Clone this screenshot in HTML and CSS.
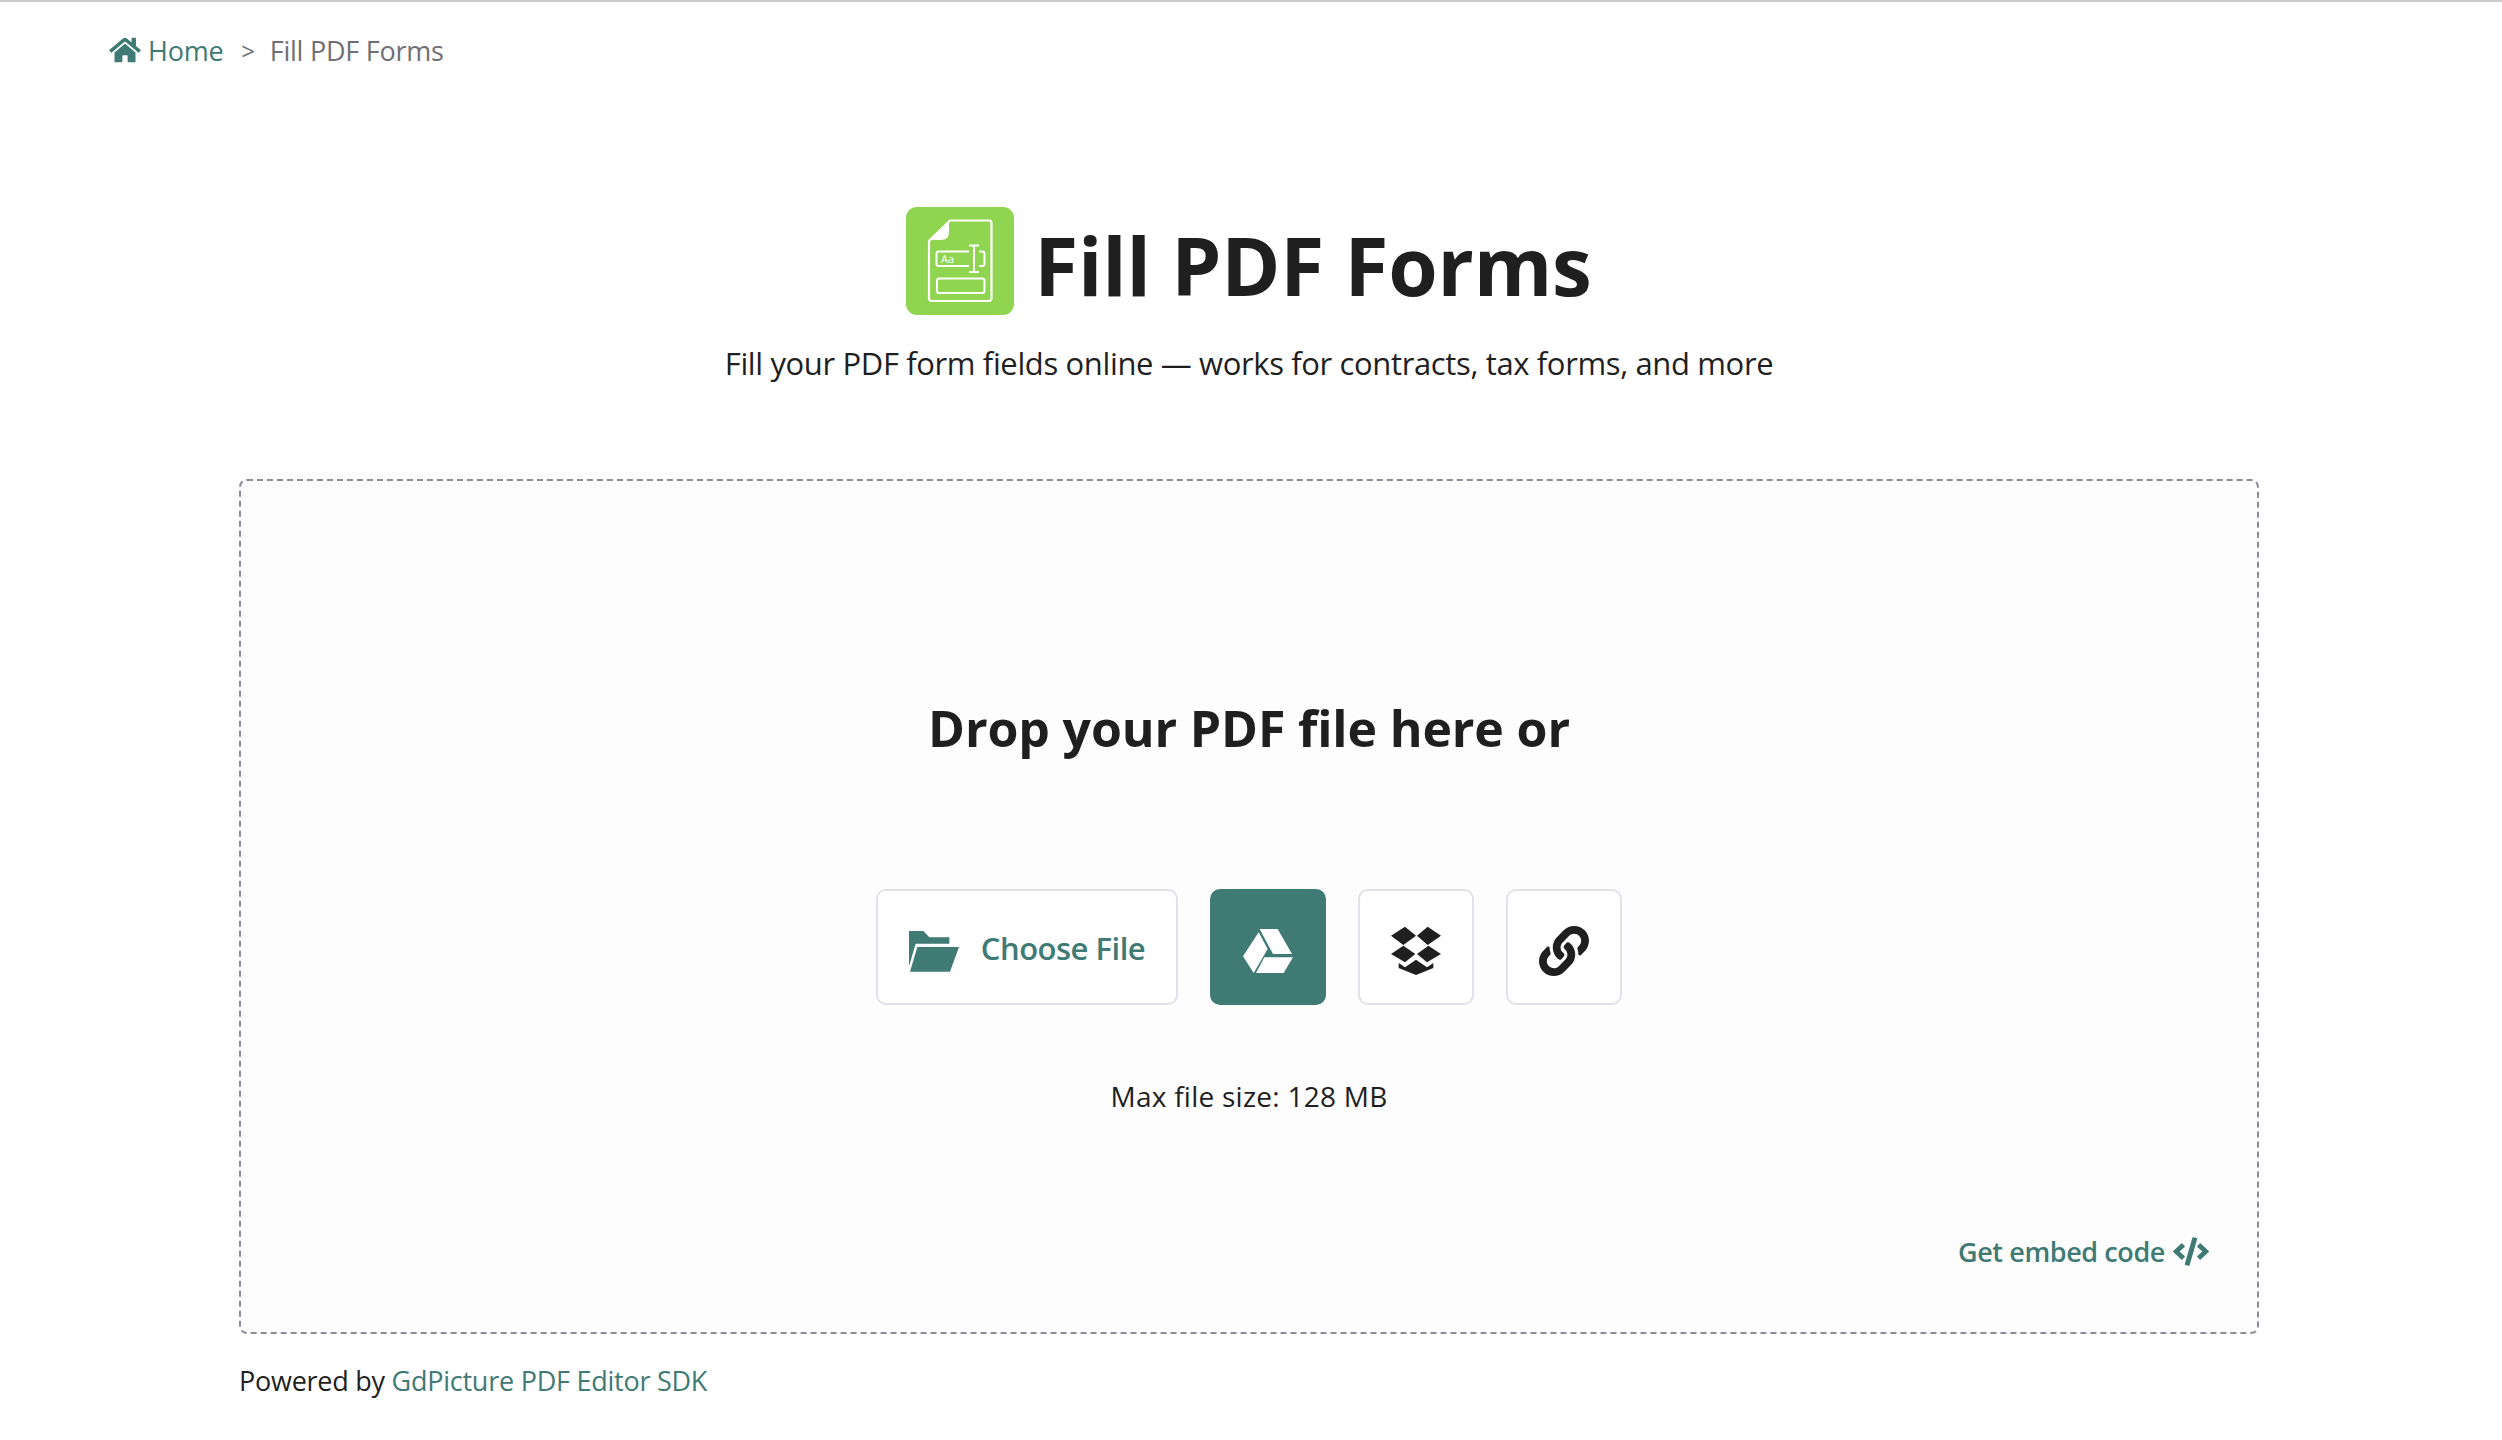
FILE: index.html
```html
<!DOCTYPE html>
<html lang="en">
<head>
	<meta charset="UTF-8">
	<title>Fill PDF Forms</title>
	<link rel="stylesheet" href="styles.css">
</head>
<body>
	<nav class="crumbs">
		<a class="crumbs__home" href="#">
			<svg class="crumbs__icon" viewBox="0 0 576 512"><path d="M280.37 148.26L96 300.11V464a16 16 0 0 0 16 16l112.06-.29a16 16 0 0 0 15.92-16V368a16 16 0 0 1 16-16h64a16 16 0 0 1 16 16v95.64a16 16 0 0 0 16 16.05L464 480a16 16 0 0 0 16-16V300L295.67 148.26a12.19 12.19 0 0 0-15.3 0zM571.6 251.47L488 182.56V44.05a12 12 0 0 0-12-12h-56a12 12 0 0 0-12 12v72.61L318.47 43a48 48 0 0 0-61 0L4.34 251.47a12 12 0 0 0-1.6 16.9l25.5 31A12 12 0 0 0 45.15 301l235.22-193.74a12.19 12.19 0 0 1 15.3 0L530.9 301a12 12 0 0 0 16.9-1.6l25.5-31a12 12 0 0 0-1.7-16.93z"/></svg>
			Home
		</a>
		<span class="crumbs__sep">&gt;</span>
		<span class="crumbs__current">Fill PDF Forms</span>
	</nav>

	<main class="page">
		<header class="head">
			<div class="head__title">
				<svg class="head__logo" viewBox="0 0 108 108">
					<rect width="108" height="108" rx="11" fill="#8fd550"/>
					<path d="M44 13.5H83a2.5 2.5 0 0 1 2.5 2.5V91.500a2.500 2.500 0 0 1-2.500 2.500H25.500a2.500 2.500 0 0 1-2.500-2.500V34Z" fill="none" stroke="#fff" stroke-width="2.2"/>
					<path d="M42 16V25q0 7-7 7H25Z" fill="#fff" stroke="#fff" stroke-width="2"/>
					<path d="M63 44.500H32.500a2 2 0 0 0-2 2V57a2 2 0 0 0 2 2H63M73 44.500H76.500a2 2 0 0 1 2 2V57a2 2 0 0 1-2 2H73" fill="none" stroke="#fff" stroke-width="2"/>
					<path d="M63 38.500H73M68 38.500V65M63 65H73" fill="none" stroke="#fff" stroke-width="2"/>
					<rect x="31" y="71.500" width="47.500" height="14.500" rx="2" fill="none" stroke="#fff" stroke-width="2"/>
					<text class="head__logo-text" x="35" y="55.500">Aa</text>
				</svg>
				<h1>Fill PDF Forms</h1>
			</div>
			<p class="head__sub">Fill your PDF form fields online — works for contracts, tax forms, and more</p>
		</header>

		<section class="drop">
			<h2 class="drop__title">Drop your PDF file here or</h2>
			<div class="drop__buttons">
				<button class="btn btn--file">
					<svg class="btn__folder" viewBox="0 0 150 123"><path d="M0 0H43L61 19H121V38H20L0 106Z"/><path d="M25 48H150L123 122H3Z"/></svg>
					Choose File
				</button>
				<button class="btn btn--square btn--drive">
					<svg class="btn__icon" viewBox="0 0 150 132"><path d="M50 0H104L147 75H90Z"/><path d="M47 10L74 60L32 132L0 82Z"/><path d="M64 85H150L122 132H39Z"/></svg>
				</button>
				<button class="btn btn--square">
					<svg class="btn__icon" viewBox="0 0 150 146"><path d="M0 27L42 0L75 27L37 55Z"/><path d="M78 27L110 0L150 27L110 55Z"/><path d="M0 82L37 57L73 82L42 107Z"/><path d="M78 82L112 57L150 82L108 107Z"/><path d="M23 109L42 122L75 99L108 122L127 109V124L75 145L23 124Z"/></svg>
				</button>
				<button class="btn btn--square">
					<svg class="btn__icon" viewBox="0 0 512 512"><path d="M326.612 185.391c59.747 59.809 58.927 155.698.36 214.59-.11.12-.24.25-.36.37l-67.2 67.2c-59.27 59.27-155.699 59.262-214.96 0-59.27-59.26-59.27-155.7 0-214.96l37.106-37.106c9.84-9.84 26.786-3.3 27.294 10.606.648 17.722 3.826 35.527 9.69 52.721 1.986 5.822.567 12.262-3.783 16.612l-13.087 13.087c-28.026 28.026-28.905 73.66-1.155 101.96 28.024 28.579 74.086 28.749 102.325.51l67.2-67.19c28.191-28.191 28.073-73.757 0-101.83-3.701-3.694-7.429-6.564-10.341-8.569a16.037 16.037 0 0 1-6.947-12.606c-.396-10.567 3.348-21.456 11.698-29.806l21.054-21.055c5.521-5.521 14.182-6.199 20.584-1.731a152.482 152.482 0 0 1 20.522 17.197zM467.547 44.449c-59.261-59.262-155.69-59.27-214.96 0l-67.2 67.2c-.12.12-.25.25-.36.37-58.566 58.892-59.387 154.781.36 214.59a152.454 152.454 0 0 0 20.521 17.196c6.402 4.468 15.064 3.789 20.584-1.731l21.054-21.055c8.35-8.35 12.094-19.239 11.698-29.806a16.037 16.037 0 0 0-6.947-12.606c-2.912-2.005-6.64-4.875-10.341-8.569-28.073-28.073-28.191-73.639 0-101.83l67.2-67.19c28.239-28.239 74.3-28.069 102.325.51 27.75 28.3 26.872 73.934-1.155 101.96l-13.087 13.087c-4.35 4.35-5.769 10.79-3.783 16.612 5.864 17.194 9.042 34.999 9.69 52.721.509 13.906 17.454 20.446 27.294 10.606l37.106-37.106c59.271-59.259 59.271-155.699.001-214.959z"/></svg>
				</button>
			</div>
			<p class="drop__limit">Max file size: 128 MB</p>
			<a class="drop__embed" href="#">Get embed code
				<svg class="drop__code" viewBox="0 0 640 512"><path d="M278.9 511.5l-61-17.7c-6.4-1.8-10-8.5-8.2-14.9L346.2 8.7c1.8-6.4 8.5-10 14.9-8.2l61 17.7c6.4 1.8 10 8.5 8.2 14.9L293.8 503.3c-1.9 6.4-8.5 10.1-14.9 8.2zm-114-112.2l43.5-46.4c4.6-4.9 4.3-12.7-.8-17.2L117 256l90.6-79.7c5.1-4.5 5.5-12.3.8-17.2l-43.5-46.4c-4.5-4.8-12.1-5.1-17-.5L3.8 247.2c-5.1 4.7-5.1 12.8 0 17.5l144.1 135.1c4.9 4.6 12.5 4.4 17-.5zm327.2.6l144.1-135.1c5.1-4.7 5.1-12.8 0-17.5L492.1 112.1c-4.8-4.5-12.4-4.3-17 .5L431.6 159c-4.6 4.9-4.3 12.7.8 17.2L523 256l-90.6 79.7c-5.1 4.5-5.5 12.3-.8 17.2l43.5 46.4c4.5 4.9 12.1 5.1 17 .6z"/></svg>
			</a>
		</section>

		<p class="powered">Powered by <a href="#">GdPicture PDF Editor SDK</a></p>
	</main>
</body>
</html>
```

FILE: styles.css
```css
* {
	box-sizing: border-box;
}
body {
	margin: 0;
	border-top: 2px solid #cccccc;
	font-family: "Open Sans", "Noto Sans", sans-serif;
	font-size: 28px;
	color: #1f1f1f;
	background: #fff;
}
a {
	color: #3f7a75;
	text-decoration: none;
}
svg {
	display: block;
	fill: currentColor;
}
.crumbs {
	display: flex;
	align-items: center;
	height: 96px;
	padding: 0 0 0 109px;
	font-size: 27px;
	letter-spacing: -0.25px;
}
.crumbs__home {
	display: flex;
	align-items: center;
	gap: 7px;
}
.crumbs__icon {
	width: 32px;
	height: 28px;
}
.crumbs__sep {
	margin: 0 15px 0 18px;
	color: #6f6f75;
	font-size: 24px;
}
.crumbs__current {
	color: #6f6f75;
}
.page {
	width: 2020px;
	margin: 0 0 0 239px;
}
.head {
	padding-top: 109px;
	text-align: center;
}
.head__title {
	display: flex;
	justify-content: center;
	align-items: center;
	gap: 20px;
}
.head__logo {
	width: 108px;
	height: 108px;
	flex: none;
}
.head__logo-text {
	fill: #fff;
	font-size: 11px;
	letter-spacing: 0;
}
h1 {
	margin: 0;
	padding-top: 8px;
	font-size: 80px;
	line-height: 100px;
	font-weight: 700;
	letter-spacing: -0.2px;
}
.head__sub {
	margin: 27px 0 0;
	font-size: 31px;
	line-height: 42px;
	letter-spacing: -0.37px;
}
.drop {
	position: relative;
	height: 855px;
	margin-top: 95px;
	padding-top: 212px;
	border: 2px dashed #8b8c9a;
	border-radius: 8px;
	background: #fdfdfd;
	text-align: center;
}
.drop__title {
	margin: 0;
	font-size: 50px;
	line-height: 70px;
	font-weight: 700;
	letter-spacing: -0.15px;
}
.drop__buttons {
	display: flex;
	justify-content: center;
	gap: 32px;
	margin-top: 126px;
}
.btn {
	display: flex;
	align-items: center;
	justify-content: center;
	height: 116px;
	padding: 0;
	border: 2px solid #e2e1e9;
	border-radius: 10px;
	background: #fff;
	color: #1f1f1f;
	font: inherit;
}
.btn--file {
	width: 302px;
	gap: 22px;
	color: #3f7a75;
	font-size: 31px;
	font-weight: 600;
	letter-spacing: -0.5px;
	line-height: 42px;
	padding-top: 2px;
}
.btn--square {
	width: 116px;
}
.btn--drive {
	border-color: #3f7a75;
	background: #3f7a75;
	color: #fff;
}
.btn__folder {
	width: 50px;
	height: 41px;
	margin-top: 6px;
}
.btn__icon {
	width: 50px;
	height: 50px;
	margin-top: 8px;
}
.drop__limit {
	margin: 71px 0 0;
	font-size: 28px;
	line-height: 40px;
	letter-spacing: 0.25px;
}
/* sits in the corner of the drop area */
.drop__embed {
	position: absolute;
	right: 48px;
	bottom: 62px;
	display: flex;
	align-items: center;
	gap: 8px;
	font-size: 27px;
	font-weight: 600;
	letter-spacing: -0.4px;
}
.drop__code {
	width: 36px;
	height: 29px;
}
.powered {
	margin: 28px 0 0;
	font-size: 27px;
	line-height: 38px;
	letter-spacing: -0.25px;
}
```
